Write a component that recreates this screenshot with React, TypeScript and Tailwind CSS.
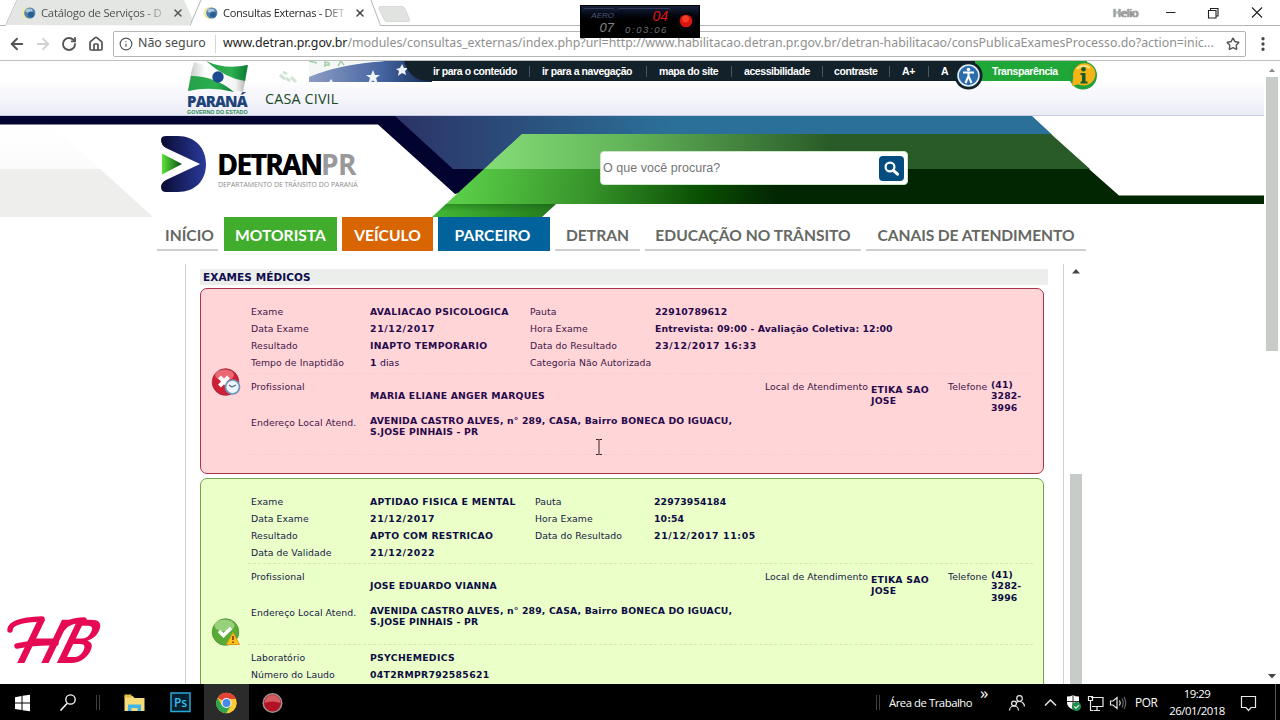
import React from 'react';
import { Home, RotateCw, ArrowLeft, ArrowRight, Star, Info, X, MoreVertical } from 'lucide-react';

function Globe() {
  return (
    <svg className="h-4 w-4 shrink-0" viewBox="0 0 16 16">
      <circle cx="6.5" cy="8" r="6" fill="#f3e9a8" />
      <circle cx="8.8" cy="8" r="5.6" fill="#4f80ab" />
      <ellipse cx="8" cy="5.6" rx="3.6" ry="2.2" fill="#a9c6dc" />
      <circle cx="10" cy="9.5" r="3" fill="#2a5f93" />
    </svg>
  );
}

function TabStrip() {
  return (
    <div className="relative h-[26px] w-full bg-white">
      <svg className="absolute inset-0" width="1280" height="26">
        <path d="M0 25.5H5.500L17 0H183L193 25.500" fill="none" stroke="#b4b6b3" />
        <path d="M6 25L17 0H184L192 18L189 25.500Z" fill="#e4e6e3" />
        <path d="M190 26L202 0H371L380 26Z" fill="#fff" />
        <path d="M190 25.500L201 0M371 0L380.500 25.500H1280" fill="none" stroke="#b4b6b3" />
        <path d="M380 6.500H402Q404 6.500 405 8.500L409.500 19Q410 21.500 408 21.500H387Q385 21.500 384 19.500L379 9Q378.500 6.500 380 6.500Z" fill="#e0e3e0" stroke="#c8cac7" strokeWidth=".6" />
      </svg>
      <div className="relative flex h-full items-center pl-[21px]">
        <Globe />
        <span className="ml-[4px] w-[128px] bg-gradient-to-r from-[#4a4a4a] from-80% to-[#e4e6e3] bg-clip-text font-['Open_Sans'] text-[11.3px] tracking-[-0.25px] whitespace-nowrap text-transparent">Catálogo de Serviços - D</span>
        <X className="ml-[3px] h-3 w-3 text-[#555]" strokeWidth={3} />
        <span className="ml-[19px]"><Globe /></span>
        <span className="ml-[4px] w-[126px] bg-gradient-to-r from-[#222] from-80% to-white bg-clip-text font-['Open_Sans'] text-[11.1px] tracking-[-0.3px] whitespace-nowrap text-transparent">Consultas Externas - DET</span>
        <X className="ml-[5px] h-3 w-3 text-[#444]" strokeWidth={3} />
        <span className="ml-[747px] font-['Open_Sans'] text-[11px] tracking-[-0.2px] text-[#bbb] [text-shadow:0_0_1px_#222,0_0_1px_#444]">Helio</span>
        <svg className="ml-auto mr-[17px]" width="98" height="14" viewBox="0 0 98 14" fill="none" stroke="#222" strokeWidth="1.1">
          <path d="M1 6.500H10.500M87 1.500L97 11.500M97 1.500L87 11.500" />
          <path d="M43.500 4.500h7.500v7.500h-7.500zM45.500 4V2.500H53V10h-2" />
        </svg>
      </div>
    </div>
  );
}

function Toolbar() {
  return (
    <div className="flex h-[35px] w-full items-center border-b border-[#bfbfbf] bg-white pt-px pl-[8px]">
      <ArrowLeft className="h-[18px] w-[18px] text-[#555]" strokeWidth={2.6} />
      <ArrowRight className="ml-[8px] h-[18px] w-[18px] text-[#d2d2d2]" strokeWidth={2.4} />
      <RotateCw className="ml-[9px] h-[16px] w-[16px] text-[#555]" strokeWidth={2.8} />
      <Home className="ml-[11px] h-[16px] w-[16px] text-[#555]" strokeWidth={2.6} />
      <div className="ml-[9px] flex h-[26px] w-[1133px] items-center rounded-[2px] border border-[#b5b5b5] pl-[5px]">
        <Info className="h-[14px] w-[14px] shrink-0 text-[#555]" strokeWidth={2} />
        <span className="ml-[5px] w-[77px] font-['Noto_Sans'] text-[12.4px] whitespace-nowrap text-[#4a4a4a]">Não seguro</span>
        <span className="h-[18px] w-px bg-[#d5d5d5]" />
        <span className="ml-[7px] w-[1003px] font-['Noto_Sans'] text-[12.36px] whitespace-nowrap text-[#909090]">
          <span className="text-[#222]">www.detran.pr.gov.br</span>/modules/consultas_externas/index.php?url=http://www.habilitacao.detran.pr.gov.br/detran-habilitacao/consPublicaExamesProcesso.do?action=inic...
        </span>
        <Star className="h-[14px] w-[14px] shrink-0 text-[#555]" strokeWidth={2.4} />
      </div>
      <MoreVertical className="ml-[8px] h-[18px] w-[18px] text-[#444]" strokeWidth={2.4} />
    </div>
  );
}

const shortcuts = [
  { text: 'ir para o conteúdo', cls: 'w-[109px]' },
  { text: 'ir para a navegação', cls: 'w-[117px]' },
  { text: 'mapa do site', cls: 'w-[85px]' },
  { text: 'acessibilidade', cls: 'w-[90px]' },
  { text: 'contraste', cls: 'w-[68px]' },
  { text: 'A+', cls: 'w-[39px]' },
  { text: 'A', cls: 'w-[20px]' },
];

function StateStrip() {
  return (
    <div className="relative h-[55px] w-full overflow-hidden border-b border-[#c5cbe0] bg-gradient-to-b from-white from-35% to-[#ebebf7]">
      <svg className="absolute inset-0" width="1264" height="54">
        <defs>
          <linearGradient id="flagBlue" x1="0" x2="1"><stop offset="0" stopColor="#8d9dc4" /><stop offset=".6" stopColor="#4463a0" /><stop offset="1" stopColor="#122a50" /></linearGradient>
          <linearGradient id="pgreen" x1="0" x2="1"><stop offset="0" stopColor="#25a04a" /><stop offset=".6" stopColor="#2cb04e" /><stop offset="1" stopColor="#0b7a35" /></linearGradient>
          <linearGradient id="pwhite" x1="0" x2="1"><stop offset="0" stopColor="#bfc4c0" /><stop offset=".3" stopColor="#fff" /><stop offset=".8" stopColor="#f4f4f4" /><stop offset="1" stopColor="#aab0ab" /></linearGradient>
        </defs>
        <path d="M309 21V15Q345 1 385 0H432V21Z" fill="url(#flagBlue)" />
        <path d="M309 0H385Q340 3 309 16Z" fill="#f4f7f6" />
        <path d="M309 0l8 2M325 6V1l4 1v2h-4M338 5l3-5 3 4" stroke="#a5cdaa" strokeWidth="1.500" fill="none" />
        <path d="M280 14l5 4M286 17l4 3M291 16l5 5M283 11l4 2" stroke="#d2e3d4" strokeWidth="3" fill="none" />
        <path d="M373 9l2 5h5l-4 3 2 6-5-3.500-5 3.500 2-6-4-3h5zM402 3l2 4h4l-3 3 1 4-4-2-4 3 1-5-3-2 4-1zM331 18l2 3h-4z" fill="#eef3fa" />
        <path d="M404 0H975V20H430C412 20 407 9 404 0Z" fill="#13212a" />
        <path d="M975 0H1087V20H975Z" fill="#1fa838" />
        <path d="M529.500 5v11M646.500 5v11M731.500 5v11M822.500 5v11M889.500 5v11M928.500 5v11" stroke="#4a565e" />
        <circle cx="968.500" cy="14.500" r="14" fill="#13212a" />
        <circle cx="968.500" cy="14.500" r="10.500" fill="#2c6cab" stroke="#dcecf8" strokeWidth="1.6" />
        <circle cx="968.500" cy="8.500" r="1.800" fill="#fff" />
        <path d="M963 11.500h11M968.500 11v5M968.500 15l-3 7M968.500 15l3 7" stroke="#fff" strokeWidth="2" fill="none" />
        <circle cx="1083" cy="14.500" r="14" fill="#1fa03a" />
        <path d="M1072 25l1.500-11a11 11 0 1 1 6 9z" fill="#f5b214" />
        <circle cx="1083.500" cy="14" r="10.500" fill="#f6b415" />
        <path d="M1077 8q6-6 13-1" stroke="#ffe38a" strokeWidth="2" fill="none" />
        <circle cx="1083.500" cy="8.300" r="2.300" fill="#175c2a" />
        <path d="M1080.500 12h5v8.500h2v2h-7v-2h1.500v-6.500h-1.500z" fill="#175c2a" />
        <path d="M194 1Q218 10 247 4Q246 18 243 31Q216 24 188 30Q190 14 194 1Z" fill="url(#pwhite)" />
        <path d="M206 0Q225 9 248 4L245 20Q225 17 206 0Z" fill="url(#pgreen)" />
        <path d="M191 15Q215 15 234 31Q210 25 188 30Z" fill="url(#pgreen)" />
        <circle cx="218" cy="16" r="5.700" fill="#1b4b8e" />
      </svg>
      <div className="relative flex">
        <div className="flex w-[265px] flex-col pt-[33px] pl-[187px]">
          <span className="font-['Open_Sans'] text-[15px] leading-[15px] font-extrabold tracking-[-0.85px] text-[#214478]">PARANÁ</span>
          <span className="font-['Liberation_Sans'] text-[5.400px] leading-[7px] font-bold whitespace-nowrap text-[#2b8b55]">GOVERNO DO ESTADO</span>
        </div>
        <span className="w-[168px] pt-[28px] font-['Open_Sans'] text-[14.300px] leading-[20px] tracking-[0.180px] text-[#17491f]">CASA CIVIL</span>
        <div className="flex h-[21px] items-center pt-px font-['Liberation_Sans'] text-[10.5px] font-bold tracking-[-0.42px] whitespace-nowrap text-white">
          {shortcuts.map((s) => (
            <span key={s.text} className={s.cls}>{s.text}</span>
          ))}
          <span className="ml-[31px]">Transparência</span>
        </div>
      </div>
    </div>
  );
}

function Banner() {
  return (
    <div className="relative h-[101px] w-full overflow-hidden bg-white">
      <svg className="absolute inset-0" width="1264" height="101">
        <defs>
          <linearGradient id="gTop" gradientUnits="userSpaceOnUse" x1="490" x2="830" y1="0" y2="0"><stop offset="0" stopColor="#83db76" /><stop offset=".4" stopColor="#62b558" /><stop offset="1" stopColor="#295b28" /></linearGradient>
          <linearGradient id="gLow" gradientUnits="userSpaceOnUse" x1="470" x2="780" y1="20" y2="70"><stop offset="0" stopColor="#59cd48" /><stop offset=".4" stopColor="#37942a" /><stop offset=".75" stopColor="#0a5003" /><stop offset="1" stopColor="#022502" /></linearGradient>
          <linearGradient id="gFold" x1="0" x2="1"><stop offset="0" stopColor="#43b935" /><stop offset="1" stopColor="#23791c" /></linearGradient>
          <linearGradient id="gFoldShade" x1="0" x2="0" y1="0" y2="1"><stop offset="0" stopColor="#155a10" stopOpacity=".4" /><stop offset=".6" stopColor="#155a10" stopOpacity="0" /></linearGradient>
          <linearGradient id="bTop" gradientUnits="userSpaceOnUse" x1="400" x2="670" y1="0" y2="0"><stop offset="0" stopColor="#2b3467" /><stop offset="1" stopColor="#2b7098" /></linearGradient>
          <linearGradient id="grayTop" x1="0" x2="0" y1="0" y2="1"><stop offset="0" stopColor="#fff" /><stop offset="1" stopColor="#fafbfa" /></linearGradient>
          <linearGradient id="dBlue" x1="0" x2="1"><stop offset="0" stopColor="#090b33" /><stop offset="1" stopColor="#2b3a9b" /></linearGradient>
          <linearGradient id="dGreen" x1="0" x2="1"><stop offset="0" stopColor="#5ce338" /><stop offset="1" stopColor="#064a14" /></linearGradient>
        </defs>
        <path d="M0 8H50L100 53H0Z" fill="url(#grayTop)" />
        <path d="M0 53H100L153 101H0Z" fill="#eeefed" />
        <path d="M0 0H420L520 60L455 78L378 8.500H0Z" fill="#03032f" />
        <path d="M395 0H1032L1052 18.500H522L484 53H453Z" fill="url(#bTop)" />
        <path d="M522 18H1051L1090 53H484Z" fill="url(#gTop)" />
        <path d="M484 53H1089L1119 79.500H1264V88H446Z" fill="url(#gLow)" />
        <path d="M446 88H556L542 101H432Z" fill="url(#gFold)" />
        <path d="M446 88H556L542 101H432Z" fill="url(#gFoldShade)" />
        <path d="M161 24Q161 20 166 20H178C195 20 206 32 206 48C206 65 195 76 178 76H166Q161 76 161 71Q161 67 166 64L200 48L166 32Q161 29 161 24Z" fill="url(#dBlue)" />
        <path d="M162 37.500L182 48L162 58.500Z" fill="url(#dGreen)" />
      </svg>
      <div className="relative flex items-start">
        <div className="flex w-[600px] flex-col pt-[36px] pl-[217px]">
          <div className="flex h-[28px] font-['Open_Sans'] text-[28px] leading-[24px] whitespace-nowrap">
            <span className="w-[104px] font-bold tracking-[-1.5px] text-black [text-shadow:0.5px_0_0_#000]">DETRAN</span>
            <span className="font-bold tracking-[-0.5px] text-[#999]">PR</span>
          </div>
          <span className="pl-[1px] font-['Open_Sans'] text-[6.9px] leading-[9px] whitespace-nowrap text-[#8b8b8b]">DEPARTAMENTO DE TRÂNSITO DO PARANÁ</span>
        </div>
        <div className="mt-[35px] flex h-[34px] w-[308px] items-center justify-between rounded-[4px] border border-[#cfe5cb] bg-white pr-[3px] pl-[2px]">
          <span className="font-['Liberation_Sans'] text-[12.5px] tracking-[0.03px] text-[#757575]">O que você procura?</span>
          <span className="flex h-[25px] w-[25px] items-center justify-center rounded-[4px] bg-[#034d80]">
            <svg width="15" height="15" viewBox="0 0 15 15" fill="none" stroke="#fff">
              <circle cx="6" cy="6" r="4.400" strokeWidth="2.200" />
              <path d="M9.300 9.300L13.500 13.200" strokeWidth="3" strokeLinecap="round" />
            </svg>
          </span>
        </div>
      </div>
    </div>
  );
}

const nav = [
  { text: 'INÍCIO', cls: 'w-[61px] border-b-2 border-[#cfcfcf] text-[#666863] mr-[6px] pl-[4px]' },
  { text: 'MOTORISTA', cls: 'w-[113px] bg-[#40ae2c] text-white mr-[5px]' },
  { text: 'VEÍCULO', cls: 'w-[91px] bg-[#d96502] text-white mr-[5px]' },
  { text: 'PARCEIRO', cls: 'w-[112px] bg-[#02629b] text-white mr-[5px] pr-[3px]' },
  { text: 'DETRAN', cls: 'w-[85px] border-b-2 border-[#cfcfcf] text-[#666863] mr-[5px]' },
  { text: 'EDUCAÇÃO NO TRÂNSITO', cls: 'w-[216px] border-b-2 border-[#cfcfcf] text-[#666863] mr-[5px]' },
  { text: 'CANAIS DE ATENDIMENTO', cls: 'w-[220px] border-b-2 border-[#cfcfcf] text-[#666863] tracking-[-0.1px]' },
];

function Nav() {
  return (
    <div className="flex h-[34px] pl-[157px] font-['Lato'] text-[15.600px] leading-[30px] font-bold">
      {nav.map((n) => (
        <div key={n.text} className={'flex h-[34px] items-start justify-center pt-[3px] whitespace-nowrap ' + n.cls}>{n.text}</div>
      ))}
    </div>
  );
}

type Row = [string, string, string?, string?];

function Val({ text = '' }: { text?: string }) {
  const spacing = text.includes('/') ? 'tracking-[0.66px]' : /[A-Z]{3}/.test(text) ? 'tracking-[0.3px]' : 'tracking-[0.1px]';
  const [first, second] = text.split('|');
  return (
    <b className={spacing}>
      {first}
      {second && <span className="font-normal">{second}</span>}
    </b>
  );
}

function Summary({ rows, cols }: { rows: Row[]; cols: string }) {
  return (
    <div className={'grid auto-rows-[17px] items-center leading-[17px] ' + cols}>
      {rows.map((r, i) => (
        <React.Fragment key={i}>
          <span>{r[0]}</span>
          <Val text={r[1]} />
          <span>{r[2]}</span>
          <Val text={r[3]} />
        </React.Fragment>
      ))}
    </div>
  );
}

function Professional({ name, line }: { name: string; line: string }) {
  return (
    <div className={'mt-[2px] mr-[10px] -ml-[3px] h-[82px] border-y border-dashed pl-[3px] ' + line}>
      <div className="flex h-[37px] leading-[11.4px]">
        <span className="w-[119px] pt-[7px]">Profissional</span>
        <b className="w-[395px] pt-[16px] tracking-[0.22px]">{name}</b>
        <span className="w-[106px] pt-[7px]">Local de Atendimento</span>
        <b className="w-[77px] pt-[10px] tracking-[0.25px]">ETIKA SAO<br />JOSE</b>
        <span className="w-[43px] pt-[7px]">Telefone</span>
        <b className="pt-[5px] tracking-[0.1px]">(41)<br />3282-<br />3996</b>
      </div>
      <div className="flex pt-[3px] leading-[11.4px]">
        <span className="w-[119px] pt-[3px]">Endereço Local Atend.</span>
        <b className="pt-[1px] tracking-[0.15px]">AVENIDA CASTRO ALVES, n° 289, CASA, Bairro BONECA DO IGUACU,<br />S.JOSE PINHAIS - PR</b>
      </div>
    </div>
  );
}

function RejectedIcon() {
  return (
    <svg width="30" height="30" viewBox="0 0 30 30">
      <circle cx="14.500" cy="15" r="13.300" fill="#cf2037" stroke="#9d2432" strokeWidth=".8" />
      <ellipse cx="13.500" cy="8" rx="9.500" ry="5.500" fill="#ef7c82" opacity=".8" />
      <path d="M8.500 10l9 9M17.500 10l-9 9" stroke="#fff" strokeWidth="4" />
      <circle cx="21.500" cy="20" r="7" fill="#edf5fc" stroke="#6f96bd" strokeWidth="1.700" />
      <path d="M21 20l4-2M21 20l-3-2" stroke="#46698c" strokeWidth="1.200" />
    </svg>
  );
}

function ApprovedIcon() {
  return (
    <svg width="30" height="30" viewBox="0 0 30 30">
      <circle cx="14.500" cy="15" r="13.300" fill="#58ac36" stroke="#4d8f36" strokeWidth=".8" />
      <ellipse cx="13.500" cy="8.500" rx="10" ry="6" fill="#a9db8e" opacity=".8" />
      <path d="M8 14l4.500 4.500L20 11" stroke="#fff" strokeWidth="3.600" fill="none" />
      <path d="M22 15.500L28.500 27.500H15.500Z" fill="#fcc419" stroke="#e39a1a" strokeLinejoin="round" />
      <path d="M22 19v4M22 24.500v1.500" stroke="#8a3a0c" strokeWidth="1.700" />
    </svg>
  );
}

function Content() {
  return (
    <div className="mt-[13px] ml-[185px] flex h-[420px] w-[898px] overflow-hidden">
      <div className="w-[879px] border-x border-[#cfd0cf] pl-[14px] font-['DejaVu_Sans'] text-[9.3px] tracking-[0.07px] text-[#2b1146]">
        <div className="mt-[5px] flex h-[16px] w-[848px] items-center bg-[#eceeeb] pt-[2px] pl-[3px] text-[10.5px] font-bold text-[#100b4f]">EXAMES MÉDICOS</div>
        <div className="mt-[3px] flex h-[186px] w-[844px] rounded-[7px] border border-[#a8344c] bg-[#ffd5d8]">
          <div className="w-[50px] pt-[78px] pl-[10px]"><RejectedIcon /></div>
          <div className="flex-1 pt-[15px] text-[#431548] [&_b]:text-[#27094c]">
            <Summary
              cols="-mt-px mb-px grid-cols-[119px_160px_125px_1fr]"
              rows={[
                ['Exame', 'AVALIACAO PSICOLOGICA', 'Pauta', '22910789612'],
                ['Data Exame', '21/12/2017', 'Hora Exame', 'Entrevista: 09:00 - Avaliação Coletiva: 12:00'],
                ['Resultado', 'INAPTO TEMPORARIO', 'Data do Resultado', '23/12/2017 16:33'],
                ['Tempo de Inaptidão', '1 |dias', 'Categoria Não Autorizada', ''],
              ]}
            />
            <Professional name="MARIA ELIANE ANGER MARQUES" line="border-[#f9cdd1]" />
          </div>
        </div>
        <div className="mt-[4px] flex h-[260px] w-[844px] rounded-[7px] border border-[#74a251] bg-[#ebffc8]">
          <div className="w-[50px] pt-[138px] pl-[10px]"><ApprovedIcon /></div>
          <div className="flex-1 pt-[15px] text-[#16204a] [&_b]:text-[#0c0c45]">
            <Summary
              cols="-mt-px mb-px grid-cols-[119px_165px_119px_1fr]"
              rows={[
                ['Exame', 'APTIDAO FISICA E MENTAL', 'Pauta', '22973954184'],
                ['Data Exame', '21/12/2017', 'Hora Exame', '10:54'],
                ['Resultado', 'APTO COM RESTRICAO', 'Data do Resultado', '21/12/2017 11:05'],
                ['Data de Validade', '21/12/2022', '', ''],
              ]}
            />
            <Professional name="JOSE EDUARDO VIANNA" line="border-[#d2e8bb]" />
            <div className="pt-[4px]">
              <Summary
                cols="grid-cols-[119px_165px_119px_1fr]"
                rows={[
                  ['Laboratório', 'PSYCHEMEDICS', '', ''],
                  ['Número do Laudo', '04T2RMPR792585621', '', ''],
                ]}
              />
            </div>
          </div>
        </div>
      </div>
      <div className="flex w-[19px] flex-col items-center pl-[5px]">
        <svg className="mt-[4px]" width="8" height="6"><path d="M0 5.500L4 1L8 5.500Z" fill="#444" /></svg>
        <div className="mt-[200px] w-[12px] flex-1 bg-[#c8ccc8]" />
      </div>
    </div>
  );
}

function Taskbar() {
  return (
    <div className="flex h-9 w-full items-center bg-black font-['Open_Sans'] text-[12px] text-white">
      <svg width="300" height="36">
        <path d="M15 13.200L21.500 12V18.500H15ZM22.500 11.800L30 10.800V18.500H22.500ZM15 19.500H21.500V26L15 24.900ZM22.500 19.500H30V27.300L22.500 26.200Z" fill="#fff" />
        <circle cx="70.500" cy="15.500" r="4.700" fill="none" stroke="#fff" strokeWidth="1.300" />
        <path d="M67 19.500L60.500 26.500" stroke="#fff" strokeWidth="1.500" />
        <path d="M96.500 11v15M99.500 11v15" stroke="#3f3f3f" />
        <path d="M124.500 12h8l2 2h10v13h-20z" fill="#f6dc78" />
        <path d="M124.500 10.500h7v3h-7z" fill="#e4bb45" />
        <path d="M128 27v-6.500h13V27h-3.500v-3h-6v3z" fill="#3fb4e6" />
        <rect x="171" y="9" width="19" height="18.500" fill="#04202e" stroke="#29a9d8" strokeWidth="1.500" />
        <text x="180.500" y="22.500" fill="#39bdf0" fontFamily="Open Sans" fontSize="12" fontWeight="600" textAnchor="middle">Ps</text>
        <rect x="204" width="45" height="36" fill="#2a2b2a" />
        <circle cx="226.500" cy="19" r="10.300" fill="#fccb2f" />
        <path d="M226.500 19L217.580 13.850A10.300 10.300 0 0 1 235.420 13.850L236 15H226Z" fill="#df4532" />
        <path d="M217.580 13.850A10.300 10.300 0 0 0 226 29.300L231 21.500L222 21.500Z" fill="#2ea552" />
        <circle cx="226.500" cy="19" r="5" fill="#fff" />
        <circle cx="226.500" cy="19" r="4" fill="#4a87e8" />
        <circle cx="272.500" cy="19" r="9.300" fill="#b31226" stroke="#9f9190" strokeWidth="1.500" />
        <path d="M264.500 19a8 8 0 0 1 16 0q-8-3-16 0z" fill="#d45a62" />
      </svg>
      <svg className="ml-[575px]" width="6" height="36"><path d="M1.500 11v15M4.500 11v15" stroke="#3f3f3f" /></svg>
      <span className="ml-[8px] w-[91px] pt-[2px] text-[11.3px] tracking-[-0.45px] whitespace-nowrap">Área de Trabalho</span>
      <span className="-mt-[20px] w-[10px] text-[17px] leading-none">»</span>
      <svg className="ml-[16px]" width="125" height="36" fill="none" stroke="#e8e8e8" strokeWidth="1.200">
        <circle cx="13.500" cy="14.500" r="2.800" /><path d="M8.500 22.500a5 5 0 0 1 10 0" />
        <circle cx="8" cy="19.500" r="2.400" fill="#000" /><path d="M3.500 26.500a4.500 4.500 0 0 1 9 0" />
        <path d="M39 21.500l5.500-5.500 5.500 5.500" strokeWidth="1.500" />
        <path d="M61 12.500q4 0 6-1.500 2 1.500 6 1.500v6q0 4.500-6 7-6-2.500-6-7z" fill="#fff" stroke="none" />
        <path d="M67 11v14M61 17.500h12" stroke="#333" strokeWidth="1" />
        <circle cx="70.500" cy="22.500" r="4.500" fill="#1c8f4d" stroke="none" /><path d="M68.300 22.500l1.700 1.700 3-3" />
        <path d="M85 13.500h12v9H86M91 23v3M88 26.500h6M82.500 12.500h4v4h-4zM84.500 17v9.500h3" />
        <path d="M104.500 17h2.500l4-3.500v11l-4-3.500h-2.500zM113.500 16.500q1.500 2.500 0 5" />
        <path d="M116 14.500q2.500 4.500 0 9M118 13q3.500 6 0 12" stroke="#666" />
      </svg>
      <span className="ml-[4px] w-[24px] pt-[2px] text-[11.8px] tracking-[-0.4px]">POR</span>
      <div className="ml-[8px] flex w-[60px] flex-col items-center text-[11.400px] leading-[17px] tracking-[-0.5px]">
        <span>19:29</span>
        <span>26/01/2018</span>
      </div>
      <svg className="ml-[12px]" width="20" height="36" fill="none" stroke="#e8e8e8" strokeWidth="1.200"><path d="M2.500 12.500h14v11h-4.500l-2.500 3-2.500-3h-4.500z" /></svg>
      <span className="mr-[4px] ml-auto h-9 w-px bg-[#555]" />
    </div>
  );
}

function Recorder() {
  return (
    <div className="absolute top-[5px] left-[580px] flex h-[33px] w-[120px] border border-black bg-gradient-to-b from-[#18223d] to-black to-60% font-['Liberation_Sans'] italic">
      <div className="m-[2px] flex w-[32px] flex-col items-end rounded-[3px] border-t border-[#2e3a57] pt-[2px] pr-[1px] text-[#82858a]">
        <span className="text-[8px] leading-[10px] text-[#4f5a73]">AERO</span>
        <span className="text-[13px] leading-[13px]">07</span>
      </div>
      <div className="my-[2px] flex w-[54px] flex-col items-end rounded-[3px] border-t border-[#2e3a57] pt-[1px] pr-[3px]">
        <span className="text-[14px] leading-[13px] text-[#e01212]">04</span>
        <span className="text-[9.5px] leading-[13px] tracking-[1.600px] whitespace-nowrap text-[#6d7078]">0:03:06</span>
      </div>
      <svg width="26" height="31"><circle cx="15" cy="16" r="9.500" fill="#05070c" /><circle cx="15" cy="15" r="6.300" fill="#d91410" /><circle cx="14.500" cy="13" r="3.500" fill="#f53a28" /></svg>
    </div>
  );
}

export default function App() {
  return (
    <div className="relative flex h-[720px] w-[1280px] flex-col overflow-hidden bg-white">
      <TabStrip />
      <Toolbar />
      <div className="flex h-[623px] w-full">
        <div className="w-[1264px] overflow-hidden">
          <StateStrip />
          <Banner />
          <Nav />
          <Content />
        </div>
        <div className="flex w-4 flex-col items-center bg-white pr-px">
          <svg className="mt-[6px]" width="8" height="6"><path d="M1 5L4 1.500L7 5Z" fill="#888" /></svg>
          <div className="mt-[4px] h-[274px] w-[12px] bg-[#c8ccc8]" />
          <svg className="mt-auto mb-[5px]" width="8" height="6"><path d="M0 1L4 5.500L8 1Z" fill="#444" /></svg>
        </div>
      </div>
      <Taskbar />
      <Recorder />
      <svg className="absolute top-[438px] left-[594px]" width="10" height="18"><path d="M2 1.500h2.500l.5.500.5-.5H8M5 2v14M2 16.500h2.500l.5-.5.5.5H8" fill="none" stroke="#3a2028" /></svg>
      <svg className="absolute top-[600px] left-0" width="125" height="80">
        <text transform="translate(15 63) skewX(-20)" fontFamily="Lato" fontStyle="italic" fontWeight="700" fontSize="60" textLength="74" lengthAdjust="spacingAndGlyphs" fill="#e60a55">HB</text>
        <path d="M10 30Q10 20 42 19M62 29Q68 20 84 20M17 46Q38 42 56 43" fill="none" stroke="#e60a55" strokeWidth="5.500" strokeLinecap="round" />
      </svg>
    </div>
  );
}
